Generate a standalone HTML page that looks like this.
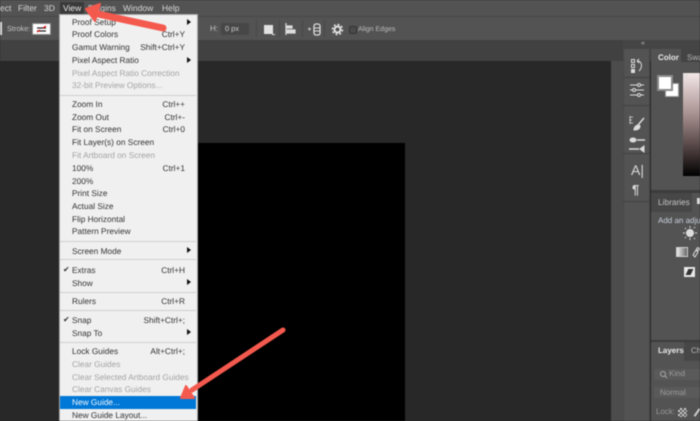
<!DOCTYPE html>
<html><head><meta charset="utf-8"><style>
html,body{margin:0;padding:0;width:700px;height:421px;overflow:hidden;background:#282828}
body{position:relative;font-family:"Liberation Sans",sans-serif;text-rendering:geometricPrecision}
div{position:absolute;box-sizing:border-box}
.t{white-space:nowrap;font-size:8.3px;line-height:12px;height:12px}
.m{color:#d6d6d6;font-size:8.5px}
.i{color:#333}.d{color:#a4a4a4}
.s{left:60px;width:136px;height:1px;background:#cfcfcf}
.r{text-align:right;width:70px;left:115px}
.a{left:187px;width:0;height:0;border-left:4px solid #111;border-top:3px solid transparent;border-bottom:3px solid transparent}
#wrap{left:0;top:0;width:700px;height:421px;filter:blur(.45px)}
</style></head><body><div id="wrap">
<!-- bars -->
<div style="left:0;top:0;width:700px;height:16px;background:#535353"></div>
<div style="left:0;top:16px;width:700px;height:1px;background:#484848"></div>
<div style="left:0;top:17px;width:700px;height:23px;background:#535353"></div>
<div style="left:0;top:40px;width:700px;height:21px;background:#414141"></div>
<!-- menu bar -->
<div class="t m" style="left:0;top:2px">ect</div>
<div class="t m" style="left:18px;top:2px">Filter</div>
<div class="t m" style="left:44px;top:2px">3D</div>
<div style="left:60px;top:2px;width:24px;height:12px;background:#3a3a3a"></div>
<div class="t m" style="left:63px;top:2px;color:#e6e6e6">View</div>
<div class="t m" style="left:88px;top:2px">Plugins</div>
<div class="t m" style="left:123px;top:2px">Window</div>
<div class="t m" style="left:162px;top:2px">Help</div>
<!-- options -->
<div style="left:0;top:22px;width:2px;height:13px;background:#ddd"></div>
<div class="t m" style="left:7px;top:23px;color:#c4c4c4;font-size:7.4px">Stroke:</div>
<div style="left:32px;top:23px;width:19px;height:12px;background:#fff;border:1px solid #888"></div>
<svg style="position:absolute;left:32px;top:23px" width="19" height="12"><path d="M5 5h9M5 8h9" stroke="#222" stroke-width="1.2"/><path d="M5 9l3-2M11 5l3-2" stroke="#e11" stroke-width="1.2"/></svg>
<div class="t m" style="left:210px;top:23px;color:#c4c4c4;font-size:8px">H:</div>
<div style="left:221px;top:23px;width:28px;height:12px;background:#474747"></div>
<div class="t m" style="left:225px;top:23px;color:#d0d0d0;font-size:7.400px">0 px</div>
<div style="left:256px;top:20px;width:1px;height:17px;background:#484848"></div>
<div style="left:279px;top:20px;width:1px;height:17px;background:#484848"></div>
<div style="left:302px;top:20px;width:1px;height:17px;background:#484848"></div>
<div style="left:324px;top:20px;width:1px;height:17px;background:#484848"></div>
<div style="left:264px;top:25px;width:9px;height:9px;background:#e2e2e2"></div>
<div style="left:272px;top:34px;width:3px;height:1px;background:#ddd"></div>
<svg style="position:absolute;left:285px;top:22px" width="14" height="14"><path d="M1 1v12M1 4h6v2H1M1 8h9v3H1" stroke="#ddd" stroke-width="1.2" fill="#ddd"/></svg>
<svg style="position:absolute;left:307px;top:22px" width="15" height="14"><path d="M1 7h3M2.5 5.500v3" stroke="#ccc"/><rect x="7" y="2" width="6" height="11" rx="2" fill="none" stroke="#ddd" stroke-width="1.3"/><path d="M7 6h6M7 9h6" stroke="#ddd"/></svg>
<svg style="position:absolute;left:331px;top:23px" width="14" height="14"><circle cx="6.500" cy="6.500" r="3" fill="none" stroke="#e4e4e4" stroke-width="2"/><circle cx="6.500" cy="6.500" r="5" fill="none" stroke="#e4e4e4" stroke-width="1.500" stroke-dasharray="2 1.900"/></svg>
<div style="left:349px;top:26px;width:8px;height:8px;border:1px solid #333;border-radius:2px;background:#4a4a4a"></div>
<div class="t m" style="left:358px;top:24px;color:#bcbcbc;font-size:7px">Align Edges</div>
<!-- artboard -->
<div style="left:190px;top:143px;width:215px;height:278px;background:#000"></div>
<!-- right column -->
<div style="left:611px;top:61px;width:12px;height:360px;background:#4c4c4c"></div>
<div style="left:623px;top:40px;width:77px;height:9px;background:#454545"></div>
<div class="t" style="left:641px;top:38px;color:#bbb;font-size:7px">«</div>
<div style="left:623px;top:49px;width:27px;height:372px;background:#535353;border-left:1px solid #484848;border-right:1px solid #484848"></div>
<div style="left:623px;top:77px;width:27px;height:1px;background:#414141"></div>
<div style="left:623px;top:105px;width:27px;height:1px;background:#414141"></div>
<div style="left:623px;top:153px;width:27px;height:1px;background:#414141"></div>
<div style="left:623px;top:201px;width:27px;height:1px;background:#414141"></div>
<svg style="position:absolute;left:623px;top:49px" width="27" height="155" fill="none" stroke="#dcdcdc">
<rect x="8.500" y="10.500" width="3" height="3" stroke-width="1"/><rect x="8.500" y="15.500" width="3" height="3" stroke-width="1"/><rect x="8" y="20" width="4" height="4" fill="#dcdcdc" stroke="none"/><path d="M14 12c5 0 6 6 2 10M14 12l2-2M14 12l2 2"/>
<path d="M7 36h14M7 41h14M7 46h14" stroke-width="1"/><circle cx="16" cy="36" r="1.500" fill="#535353"/><circle cx="11" cy="41" r="1.500" fill="#535353"/><circle cx="16" cy="46" r="1.500" fill="#535353"/>
<path d="M7 68h3M7 71h2M7 74h3M7 67v8" stroke-width=".8"/><path d="M21 69l-6 7" stroke-width="1.500"/><path d="M11 81c0-3 2-5 5-5l1 1c0 3-3 4-6 4z" fill="#dcdcdc"/>
<path d="M14 91h8M6 100h10" stroke-width="1.500"/><ellipse cx="10" cy="91" rx="3" ry="2" fill="#dcdcdc"/><path d="M17 100l4-3v6z" fill="#dcdcdc"/>
</svg>
<div class="t" style="left:631px;top:162px;color:#d8d8d8;font-size:14px;line-height:16px;height:16px">A|</div>
<div class="t" style="left:632px;top:182px;color:#d8d8d8;font-size:13px;line-height:15px;height:15px;font-weight:bold">¶</div>
<!-- color panel -->
<div style="left:651px;top:49px;width:49px;height:141px;background:#535353"></div>
<div style="left:651px;top:49px;width:49px;height:13px;background:#444"></div>
<div style="left:651px;top:49px;width:30px;height:13px;background:#535353"></div>
<div class="t" style="left:658px;top:52px;color:#e8e8e8;font-size:8px;font-weight:bold">Color</div>
<div class="t" style="left:687px;top:52px;color:#b4b4b4;font-size:8px">Swa</div>
<div style="left:665px;top:83px;width:14px;height:14px;background:#fff;border:1px solid #999"></div>
<div style="left:657px;top:75px;width:16px;height:16px;background:#fff;border:2px solid #8a8a8a"></div>
<div style="left:683px;top:73px;width:17px;height:103px;background:linear-gradient(#f4e8e8,#a89090 40%,#4a3c3c 75%,#000)"></div>
<div style="left:683px;top:73px;width:5px;height:5px;border:1px solid #ddd;border-radius:50%"></div>
<!-- adjustments -->
<div style="left:651px;top:190px;width:49px;height:3px;background:#3c3c3c"></div>
<div style="left:651px;top:193px;width:49px;height:149px;background:#535353"></div>
<div style="left:651px;top:193px;width:41px;height:19px;background:#474747"></div>
<div class="t" style="left:658px;top:196px;color:#c4c4c4;font-size:8.300px">Libraries</div>
<div style="left:697px;top:198px;width:3px;height:6px;background:#ddd"></div>
<div class="t" style="left:658px;top:215px;color:#c8d0dc;font-size:8px">Add an adjust</div>
<svg style="position:absolute;left:680px;top:225px" width="20" height="60" fill="none" stroke="#ddd">
<circle cx="10" cy="8" r="3.500" fill="#ddd"/><path d="M10 1v2M10 13v2M3 8h2M15 8h2M5 3l1 1M14 3l1-1M5 13l1-1M14 13l1 1" stroke-width="1"/>
</svg>
<div style="left:676px;top:247px;width:12px;height:10px;background:linear-gradient(90deg,#eee,#666);border:1px solid #ccc"></div>
<svg style="position:absolute;left:692px;top:247px" width="8" height="11" fill="none" stroke="#ddd"><path d="M4 3l-3 5 2 2 3-5z"/><circle cx="6" cy="2" r="1.300"/></svg>
<div style="left:684px;top:267px;width:11px;height:10px;background:#e8e8e8"></div>
<div style="left:687px;top:269px;width:5px;height:6px;background:#333;transform:skewX(-25deg)"></div>
<!-- layers -->
<div style="left:651px;top:340px;width:49px;height:2px;background:#3c3c3c"></div>
<div style="left:651px;top:342px;width:49px;height:79px;background:#535353"></div>
<div style="left:684px;top:342px;width:16px;height:19px;background:#474747"></div>
<div class="t" style="left:658px;top:345px;color:#e8e8e8;font-size:8px;font-weight:bold">Layers</div>
<div class="t" style="left:691px;top:345px;color:#b4b4b4;font-size:8px">Ch</div>
<div style="left:654px;top:369px;width:46px;height:11px;background:#5a5a5a"></div>
<svg style="position:absolute;left:659px;top:370px" width="9" height="9" fill="none" stroke="#aaa"><circle cx="4" cy="4" r="2.500"/><path d="M6 6l2 2"/></svg>
<div class="t" style="left:669px;top:368px;color:#9c9c9c;font-size:8px">Kind</div>
<div style="left:654px;top:387px;width:46px;height:11px;background:#5a5a5a"></div>
<div class="t" style="left:660px;top:387px;color:#9c9c9c;font-size:8px">Normal</div>
<div class="t" style="left:656px;top:406px;color:#9a9a9a;font-size:8px">Lock:</div>
<div style="left:678px;top:408px;width:9px;height:9px;background:repeating-conic-gradient(#ccc 0 25%,#555 0 50%) 0 0/4px 4px"></div>
<div style="left:696px;top:408px;width:2px;height:9px;background:#ccc;transform:rotate(35deg)"></div>
<!-- menu -->
<div style="left:59px;top:14px;width:139px;height:407px;background:#f0f0f0;border:1px solid #a8a8a8;border-bottom:0"></div>
<div class="t i" style="left:72px;top:16px">Proof Setup</div>
<div class="a" style="top:19px"></div>
<div class="t i" style="left:72px;top:28px">Proof Colors</div><div class="t i r" style="top:28px">Ctrl+Y</div>
<div class="t i" style="left:72px;top:41px">Gamut Warning</div><div class="t i r" style="top:41px">Shift+Ctrl+Y</div>
<div class="t i" style="left:72px;top:54px">Pixel Aspect Ratio</div>
<div class="a" style="top:57px"></div>
<div class="t d" style="left:72px;top:67px">Pixel Aspect Ratio Correction</div>
<div class="t d" style="left:72px;top:79px">32-bit Preview Options...</div>
<div class="s" style="top:95px"></div>
<div class="t i" style="left:72px;top:98px">Zoom In</div><div class="t i r" style="top:98px">Ctrl++</div>
<div class="t i" style="left:72px;top:111px">Zoom Out</div><div class="t i r" style="top:111px">Ctrl+-</div>
<div class="t i" style="left:72px;top:123px">Fit on Screen</div><div class="t i r" style="top:123px">Ctrl+0</div>
<div class="t i" style="left:72px;top:136px">Fit Layer(s) on Screen</div>
<div class="t d" style="left:72px;top:149px">Fit Artboard on Screen</div>
<div class="t i" style="left:72px;top:162px">100%</div><div class="t i r" style="top:162px">Ctrl+1</div>
<div class="t i" style="left:72px;top:175px">200%</div>
<div class="t i" style="left:72px;top:187px">Print Size</div>
<div class="t i" style="left:72px;top:200px">Actual Size</div>
<div class="t i" style="left:72px;top:213px">Flip Horizontal</div>
<div class="t i" style="left:72px;top:225px">Pattern Preview</div>
<div class="s" style="top:241px"></div>
<div class="t i" style="left:72px;top:245px">Screen Mode</div>
<div class="a" style="top:247px"></div>
<div class="s" style="top:259px"></div>
<div class="t i" style="left:63px;top:264px;font-size:8px">✔</div>
<div class="t i" style="left:72px;top:264px">Extras</div><div class="t i r" style="top:264px">Ctrl+H</div>
<div class="t i" style="left:72px;top:277px">Show</div>
<div class="a" style="top:279px"></div>
<div class="s" style="top:292px"></div>
<div class="t i" style="left:72px;top:295px">Rulers</div><div class="t i r" style="top:295px">Ctrl+R</div>
<div class="s" style="top:310px"></div>
<div class="t i" style="left:63px;top:314px;font-size:8px">✔</div>
<div class="t i" style="left:72px;top:314px">Snap</div><div class="t i r" style="top:314px">Shift+Ctrl+;</div>
<div class="t i" style="left:72px;top:327px">Snap To</div>
<div class="a" style="top:329px"></div>
<div class="s" style="top:342px"></div>
<div class="t i" style="left:72px;top:345px">Lock Guides</div><div class="t i r" style="top:345px">Alt+Ctrl+;</div>
<div class="t d" style="left:72px;top:358px">Clear Guides</div>
<div class="t d" style="left:72px;top:371px">Clear Selected Artboard Guides</div>
<div class="t d" style="left:72px;top:383px">Clear Canvas Guides</div>
<div style="left:60px;top:396px;width:136px;height:13px;background:#0078d7"></div>
<div class="t" style="left:72px;top:396px;color:#f0f6fc">New Guide...</div>
<div class="t i" style="left:72px;top:409px">New Guide Layout...</div>
<!-- arrows -->
<svg style="position:absolute;left:0;top:0" width="700" height="421">
<path d="M163 28L98 14" stroke="#f4594e" stroke-width="7" stroke-linecap="round"/>
<path d="M86 9L100 4L95 21z" fill="#f4594e" stroke="#f4594e" stroke-width="2" stroke-linejoin="round"/>
<path d="M283 330L192 390" stroke="#f4594e" stroke-width="5" stroke-linecap="round"/>
<path d="M181 398L186 386L194 398z" fill="#f4594e" stroke="#f4594e" stroke-width="2" stroke-linejoin="round"/>
</svg>
</div></body></html>
